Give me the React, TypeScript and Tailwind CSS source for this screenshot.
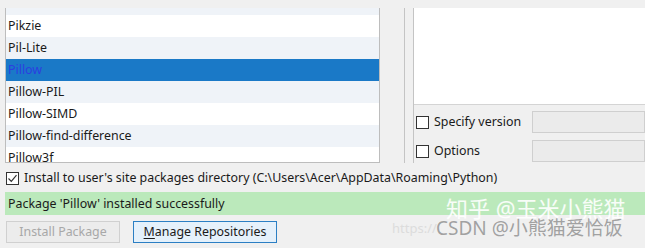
import React from 'react';

const packages = [
  { name: '', partial: true },
  { name: 'Pikzie' },
  { name: 'Pil-Lite' },
  { name: 'Pillow', selected: true },
  { name: 'Pillow-PIL' },
  { name: 'Pillow-SIMD' },
  { name: 'Pillow-find-difference' },
  { name: 'Pillow3f' },
];

const CheckBox: React.FC<{ checked?: boolean }> = ({ checked }) => (
  <span className="w-[13px] h-[13px] border border-[#333] bg-white flex items-center justify-center shrink-0">
    {checked && (
      <svg width="11" height="11" viewBox="0 0 11 11">
        <path d="M1.5 5.5 L4.3 8.3 L9.5 2.2" fill="none" stroke="#333" strokeWidth="1.2" />
      </svg>
    )}
  </span>
);

const App: React.FC = () => {
  return (
    <div className="relative w-[645px] h-[248px] overflow-hidden bg-[#f0f0f0] text-[12.4px] text-[#1a1a1a] font-['Noto_Sans','Noto_Sans_CJK_SC',sans-serif]">
      <div className="flex h-[163px] pt-[8px]">
        <div className="ml-[5px] w-[375px] bg-white border-l border-r border-b border-[#bdbdbd] overflow-hidden">
          {packages.map((p, i) => (
            <div
              key={i}
              className={
                (p.partial ? 'h-[7px] ' : 'h-[22px] ') +
                (p.selected ? 'bg-[#1a79c7] text-[#2b3fe0] ' : i % 2 === 0 ? 'bg-[#eff3f8] ' : 'bg-white ') +
                'pl-[2px] leading-[22px] whitespace-nowrap'
              }
            >
              {p.name}
            </div>
          ))}
        </div>
        <div className="w-[24px]" />
        <div className="w-[10px] border-l border-r border-[#c4c4c4] bg-[radial-gradient(#8a8a8a_0.6px,transparent_0.7px)] bg-[length:2px_2px]" />
        <div className="flex-1 flex flex-col">
          <div className="h-[96px] bg-white" />
          <div className="border-t border-[#d4d4d4] pt-[6px] flex flex-col gap-[7px]">
            <div className="flex items-center h-[22px]">
              <div className="w-[2px]" />
              <CheckBox />
              <span className="ml-[5px] w-[98px]">Specify version</span>
              <div className="flex-1 h-[22px] border border-[#cfcfcf] bg-[#ebebeb]" />
            </div>
            <div className="flex items-center h-[22px]">
              <div className="w-[2px]" />
              <CheckBox />
              <span className="ml-[5px] w-[98px]">Options</span>
              <div className="flex-1 h-[22px] border border-[#cfcfcf] bg-[#ebebeb]" />
            </div>
          </div>
        </div>
      </div>

      <div className="flex items-center h-[16px] mt-[7px] ml-[6px]">
        <CheckBox checked />
        <span className="ml-[5px] whitespace-nowrap">
          Install to user's site packages directory (C:\Users\Acer\AppData\Roaming\Python)
        </span>
      </div>

      <div className="mt-[6px] ml-[5px] h-[23px] bg-[#bbe9bb] pl-[3px] leading-[23px]">
        Package 'Pillow' installed successfully
      </div>

      <div className="flex gap-[13px] mt-[6px] ml-[6px]">
        <div className="w-[114px] h-[22px] border border-[#d0d0d0] bg-[#ececec] text-[#a8a8a8] flex items-center justify-center">
          Install Package
        </div>
        <div className="w-[144px] h-[22px] border border-[#2b7fc4] bg-[#e5f1fb] flex items-center justify-center">
          <span>
            <span className="underline underline-offset-2">M</span>anage Repositories
          </span>
        </div>
      </div>

      <div className="absolute left-[392px] top-[222px] text-[13px] text-[#dcdcdc] leading-none">https://</div>
      <div className="absolute left-[436px] top-[219px] text-[19px] text-[#8c8c8c]/80 leading-none whitespace-nowrap">
        CSDN @小熊猫爱恰饭
      </div>
      <div className="absolute left-[446px] top-[197px] text-[22px] text-white/90 leading-none whitespace-nowrap">
        知乎 @玉米小熊猫
      </div>
    </div>
  );
};

export default App;
